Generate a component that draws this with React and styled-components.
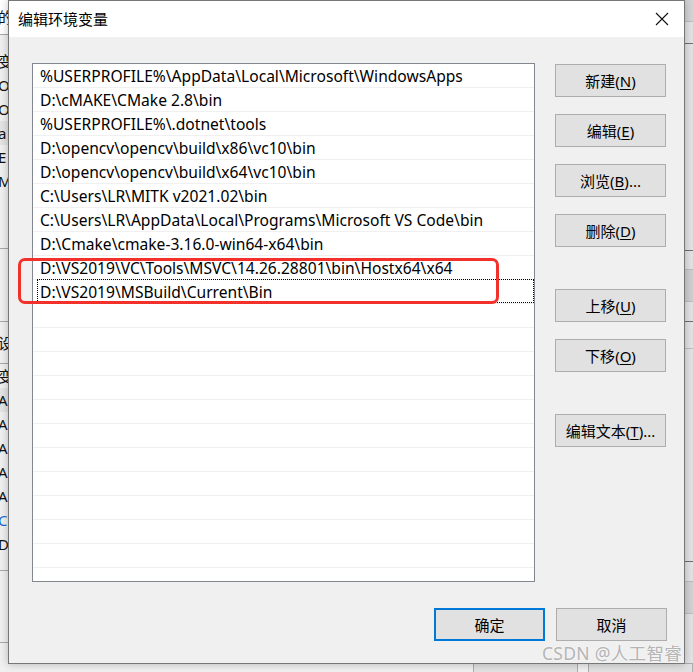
import React from "react";
import styled, { createGlobalStyle } from "styled-components";

const GlobalStyle = createGlobalStyle`
  html, body {
    margin: 0;
    padding: 0;
    width: 693px;
    height: 672px;
    overflow: hidden;
    background: #f0f0f0;
  }
  * { box-sizing: border-box; }
`;

const uiFont = `"Noto Sans", "Noto Sans CJK SC", sans-serif`;

const paths = [
  "%USERPROFILE%\\AppData\\Local\\Microsoft\\WindowsApps",
  "D:\\cMAKE\\CMake 2.8\\bin",
  "%USERPROFILE%\\.dotnet\\tools",
  "D:\\opencv\\opencv\\build\\x86\\vc10\\bin",
  "D:\\opencv\\opencv\\build\\x64\\vc10\\bin",
  "C:\\Users\\LR\\MITK v2021.02\\bin",
  "C:\\Users\\LR\\AppData\\Local\\Programs\\Microsoft VS Code\\bin",
  "D:\\Cmake\\cmake-3.16.0-win64-x64\\bin",
  "D:\\VS2019\\VC\\Tools\\MSVC\\14.26.28801\\bin\\Hostx64\\x64",
  "D:\\VS2019\\MSBuild\\Current\\Bin",
];

/* ---------- window behind the dialog ---------- */

const Desktop = styled.div`
  position: relative;
  width: 693px;
  height: 672px;
  display: flex;
  flex-direction: column;
  font-family: ${uiFont};
  overflow: hidden;
`;

const BackRow = styled.div`
  flex: 1;
  display: flex;
  justify-content: space-between;
`;

const LeftPane = styled.div`
  width: 9px;
  display: flex;
  flex-direction: column;
  background: #f0f0f0;
  overflow: hidden;
`;

const BackCell = styled.div`
  flex: none;
  height: ${(p) => p.$h || 24}px;
  line-height: ${(p) => (p.$h && p.$h < 50 ? p.$h : 24)}px;
  font-size: 15px;
  white-space: nowrap;
  color: ${(p) => (p.$blue ? "#1a6fd0" : "#111")};
  background: ${(p) => (p.$bg ? p.$bg : "transparent")};
  border-bottom: ${(p) => (p.$line ? "1px solid #a8a8a8" : "none")};
  margin-left: -2px;
`;

const RightPane = styled.div`
  width: 9px;
  display: flex;
  flex-direction: column;
  background: #e3e3e3;
`;

const RightBlock = styled.div`
  flex: none;
  height: ${(p) => p.$h}px;
  background: ${(p) => p.$bg || "#e3e3e3"};
  border-bottom: 1px solid ${(p) => p.$line || "#bdbdbd"};
`;

const BottomStrip = styled.div`
  height: 9px;
  display: flex;
  gap: 10px;
  padding-left: 473px;
  background: #f0f0f0;
`;

const GhostButton = styled.div`
  width: 111px;
  height: 20px;
  border: 1px solid #adadad;
  background: #e1e1e1;
`;

/* ---------- dialog ---------- */

const Dialog = styled.div`
  position: absolute;
  left: 8px;
  top: 0;
  width: 677px;
  height: 664px;
  background: #f0f0f0;
  border: 1px solid #777;
  box-shadow: 0 0 8px rgba(0, 0, 0, 0.25);
  display: flex;
  flex-direction: column;
`;

const TitleBar = styled.div`
  height: 36px;
  background: #fff;
  display: flex;
  align-items: center;
  justify-content: space-between;
  padding-left: 9px;
  padding-right: 14px;
`;

const Title = styled.span`
  font-family: "Noto Sans CJK SC", sans-serif;
  font-size: 15px;
  color: #000;
  margin-top: -1px;
`;

const CloseButton = styled.div`
  width: 16px;
  height: 16px;
  display: flex;
  align-items: center;
  justify-content: center;
`;

const Body = styled.div`
  flex: 1;
  display: flex;
  flex-direction: column;
  padding: 26px 17px 0 23px;
`;

const Main = styled.div`
  display: flex;
  gap: 20px;
`;

const ListBox = styled.div`
  width: 503px;
  height: 519px;
  background: #fff;
  border: 1px solid #828790;
  overflow: hidden;
`;

const Row = styled.div`
  position: relative;
  height: 24px;
  line-height: 25px;
  padding-left: 7px;
  border-bottom: 1px solid #f0f0f0;
  font-family: ${uiFont};
  font-size: 15.6px;
  color: #000;
  white-space: nowrap;
  &::after {
    content: "";
    display: ${(p) => (p.$focus ? "block" : "none")};
    position: absolute;
    left: 4px;
    right: 0;
    top: -1px;
    bottom: 0;
    border: 1px dotted #000;
  }
`;

const ButtonColumn = styled.div`
  display: flex;
  flex-direction: column;
  padding-top: 1px;
`;

const Button = styled.div`
  width: 111px;
  height: 33px;
  margin-top: ${(p) => p.$gap || 0}px;
  background: #e1e1e1;
  border: ${(p) => (p.$primary ? "2px solid #0078d7" : "1px solid #adadad")};
  display: flex;
  align-items: center;
  justify-content: center;
  font-family: ${uiFont};
  font-size: 15px;
  color: #000;
  white-space: nowrap;
  u {
    text-decoration: underline;
    text-underline-offset: 2px;
  }
`;

const Footer = styled.div`
  display: flex;
  justify-content: flex-end;
  gap: 11px;
  margin-top: 26px;
`;

const Highlight = styled.div`
  position: absolute;
  left: 9px;
  top: 257px;
  width: 481px;
  height: 46px;
  border: 3px solid #f2312b;
  border-radius: 7px;
  pointer-events: none;
`;

const Watermark = styled.div`
  position: absolute;
  right: 2px;
  bottom: 1px;
  line-height: 1;
  font-family: "Noto Sans", "Noto Sans CJK SC", sans-serif;
  font-size: 17.5px;
  color: #b4b4b4;
  text-shadow: 0 0 2px #fff;
  letter-spacing: 0.3px;
  white-space: nowrap;
`;

function Label({ text, hotkey, tail = "" }) {
  return (
    <span>
      {text}(<u>{hotkey}</u>){tail}
    </span>
  );
}

function Backdrop() {
  return (
    <BackRow>
      <LeftPane>
        <BackCell $h={35} $bg="#fff" $line>的</BackCell>
        <BackCell $h={14} />
        <BackCell>变</BackCell>
        <BackCell>Or</BackCell>
        <BackCell>Or</BackCell>
        <BackCell $bg="#e4e4e4">a</BackCell>
        <BackCell>E</BackCell>
        <BackCell>M</BackCell>
        <BackCell $h={56} $line />
        <BackCell $h={73} $line />
        <BackCell $h={42} $line>设</BackCell>
        <BackCell>变</BackCell>
        <BackCell $bg="#e4e4e4">An</BackCell>
        <BackCell>An</BackCell>
        <BackCell>AN</BackCell>
        <BackCell>AN</BackCell>
        <BackCell>AN</BackCell>
        <BackCell $blue>C</BackCell>
        <BackCell>D:\</BackCell>
        <BackCell $h={15} $line />
        <BackCell $h={72} $line />
      </LeftPane>
      <RightPane>
        <RightBlock $h={22} $bg="#d4d4d4" />
        <RightBlock $h={22} $line="#707070" />
        <RightBlock $h={207} $line="#707070" />
        <RightBlock $h={19} />
        <RightBlock $h={32} $bg="#cfcfcf" />
        <RightBlock $h={20} $line="#707070" />
        <RightBlock $h={27} />
        <RightBlock $h={213} $line="#707070" />
        <RightBlock $h={20} />
        <RightBlock $h={32} $bg="#d2d2d2" />
      </RightPane>
    </BackRow>
  );
}

export default function App() {
  return (
    <>
      <GlobalStyle />
      <Desktop>
        <Backdrop />
        <BottomStrip>
          <GhostButton />
          <GhostButton />
        </BottomStrip>

        <Dialog>
          <TitleBar>
            <Title>编辑环境变量</Title>
            <CloseButton>
              <svg width="14" height="14" viewBox="0 0 14 14">
                <path d="M1 1 L13 13 M13 1 L1 13" stroke="#111" strokeWidth="1.1" />
              </svg>
            </CloseButton>
          </TitleBar>
          <Body>
            <Main>
              <ListBox>
                {paths.map((p, i) => (
                  <Row key={i} $focus={i === 9}>
                    {p}
                  </Row>
                ))}
                {Array.from({ length: 12 }).map((_, i) => (
                  <Row key={"e" + i} />
                ))}
              </ListBox>
              <ButtonColumn>
                <Button><Label text="新建" hotkey="N" /></Button>
                <Button $gap={17}><Label text="编辑" hotkey="E" /></Button>
                <Button $gap={17}><Label text="浏览" hotkey="B" tail="..." /></Button>
                <Button $gap={17}><Label text="删除" hotkey="D" /></Button>
                <Button $gap={42}><Label text="上移" hotkey="U" /></Button>
                <Button $gap={17}><Label text="下移" hotkey="O" /></Button>
                <Button $gap={42}><Label text="编辑文本" hotkey="T" tail="..." /></Button>
              </ButtonColumn>
            </Main>
            <Footer>
              <Button $primary>确定</Button>
              <Button>取消</Button>
            </Footer>
          </Body>
          <Highlight />
          <Watermark>CSDN @人工智睿</Watermark>
        </Dialog>
      </Desktop>
    </>
  );
}
